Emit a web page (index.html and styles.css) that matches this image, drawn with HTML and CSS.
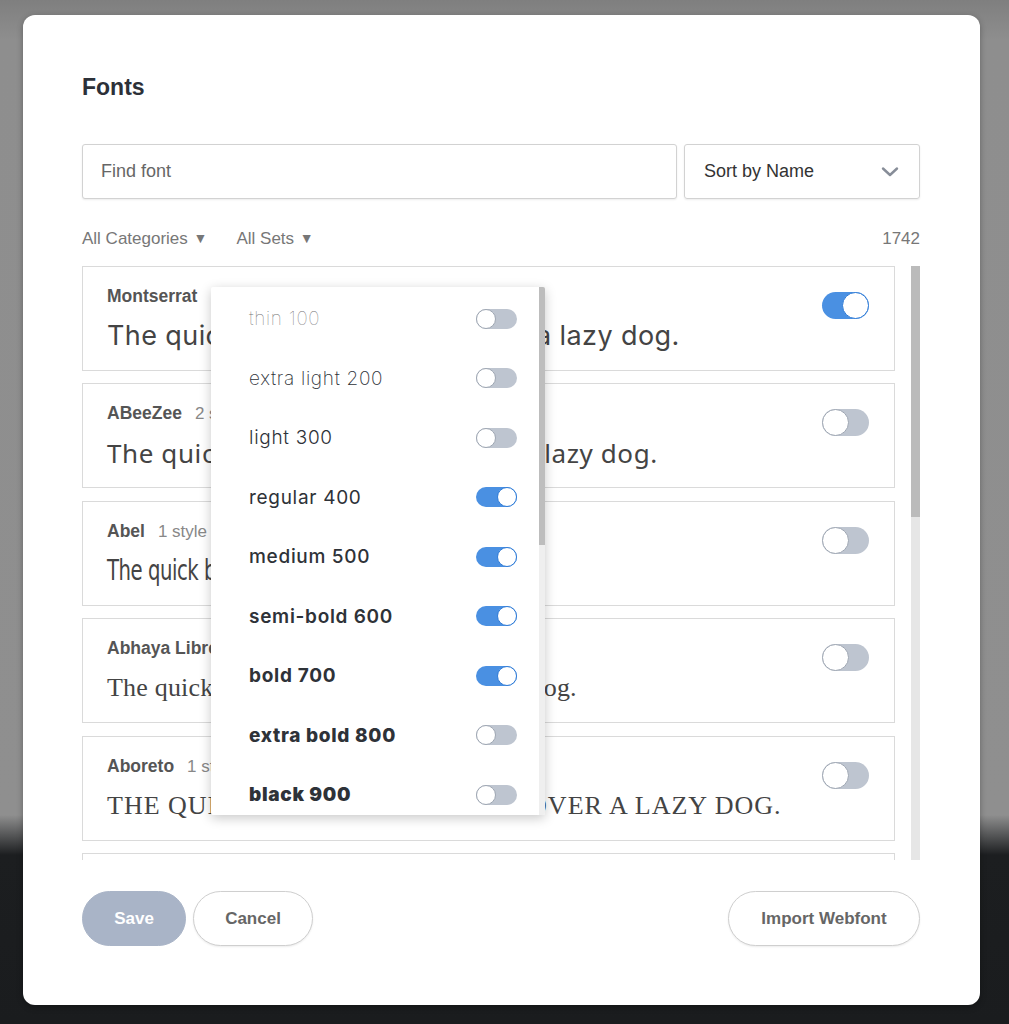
FILE: index.html
```html
<!DOCTYPE html>
<html lang="en">
<head>
    <meta charset="UTF-8">
    <meta name="viewport" content="width=device-width, initial-scale=1.0">
    <title>Fonts</title>
    <link rel="stylesheet" href="styles.css">
</head>
<body>
    <div class="modal">
        <h1 class="modal-title">Fonts</h1>

        <div class="search-row">
            <input class="search" type="text" placeholder="Find font">
            <div class="sort">
                <span>Sort by Name</span>
                <svg class="chevron" width="18" height="12" viewBox="0 0 18 12">
                    <path d="M2 2.5 L9 9 L16 2.5" fill="none" stroke="#878d98" stroke-width="2.4" stroke-linecap="round" stroke-linejoin="round"/>
                </svg>
            </div>
        </div>

        <div class="filters">
            <span class="filter">All Categories <i>▼</i></span>
            <span class="filter">All Sets <i>▼</i></span>
            <span class="count">1742</span>
        </div>

        <div class="list-wrap">
            <div class="font-list">
                <div class="font-item">
                    <div class="font-info">
                        <div class="font-head"><span class="font-name">Montserrat</span><span class="font-styles">18 styles</span></div>
                        <div class="font-sample s-montserrat">The quick brown fox jumps over a lazy dog.</div>
                    </div>
                    <span class="toggle on"></span>
                </div>
                <div class="font-item">
                    <div class="font-info">
                        <div class="font-head"><span class="font-name">ABeeZee</span><span class="font-styles">2 styles</span></div>
                        <div class="font-sample s-abeezee">The quick brown fox jumps over a lazy dog.</div>
                    </div>
                    <span class="toggle"></span>
                </div>
                <div class="font-item">
                    <div class="font-info">
                        <div class="font-head"><span class="font-name">Abel</span><span class="font-styles">1 style</span></div>
                        <div class="font-sample"><span class="s-abel">The quick brown fox jumps over a lazy dog.</span></div>
                    </div>
                    <span class="toggle"></span>
                </div>
                <div class="font-item">
                    <div class="font-info">
                        <div class="font-head"><span class="font-name">Abhaya Libre</span><span class="font-styles">5 styles</span></div>
                        <div class="font-sample s-abhaya">The quick brown fox jumps over a lazy dog.</div>
                    </div>
                    <span class="toggle"></span>
                </div>
                <div class="font-item">
                    <div class="font-info">
                        <div class="font-head"><span class="font-name">Aboreto</span><span class="font-styles">1 style</span></div>
                        <div class="font-sample s-aboreto">The quick brown fox jumps over a lazy dog.</div>
                    </div>
                    <span class="toggle"></span>
                </div>
                <div class="font-item">
                    <div class="font-info">
                        <div class="font-head"><span class="font-name">Abril Fatface</span><span class="font-styles">1 style</span></div>
                        <div class="font-sample">The quick brown fox jumps over a lazy dog.</div>
                    </div>
                    <span class="toggle"></span>
                </div>
            </div>
            <div class="scrollbar"><div class="thumb"></div></div>
        </div>

        <div class="actions">
            <button class="btn btn-save">Save</button>
            <button class="btn btn-cancel">Cancel</button>
            <button class="btn btn-import">Import Webfont</button>
        </div>

        <!-- menu de estilos de Montserrat -->
        <div class="styles-menu">
            <ul class="weights">
                <li class="w100"><span>thin 100</span><span class="toggle small"></span></li>
                <li class="w200"><span>extra light 200</span><span class="toggle small"></span></li>
                <li class="w300"><span>light 300</span><span class="toggle small"></span></li>
                <li class="w400"><span>regular 400</span><span class="toggle small on"></span></li>
                <li class="w500"><span>medium 500</span><span class="toggle small on"></span></li>
                <li class="w600"><span>semi-bold 600</span><span class="toggle small on"></span></li>
                <li class="w700"><span>bold 700</span><span class="toggle small on"></span></li>
                <li class="w800"><span>extra bold 800</span><span class="toggle small"></span></li>
                <li class="w900"><span>black 900</span><span class="toggle small"></span></li>
            </ul>
            <div class="menu-scroll"><div class="menu-thumb"></div></div>
        </div>
    </div>
</body>
</html>
```

FILE: styles.css
```css
body {
    margin: 0;
    font-family: "Liberation Sans", Arial, sans-serif;
    background: linear-gradient(to bottom, #7f7f7f 0, #8e8e8e 40px, #8f8f8f 815px, #1c1e20 855px, #1a1c1e 100%);
    min-height: 1024px;
    overflow: hidden;
}

.modal {
    position: relative;
    box-sizing: border-box;
    margin: 15px 29px 0 23px;
    height: 990px;
    padding: 59px 60px 0 59px;
    background-color: #fff;
    border-radius: 12px;
    box-shadow: 0 2px 6px rgba(0, 0, 0, 0.3);
}

.modal-title {
    margin: 0 0 44px;
    font-size: 23px;
    line-height: 26px;
    font-weight: bold;
    color: #2c3038;
}

/* Buscador */
.search-row {
    display: flex;
    gap: 7px;
    height: 55px;
}
.search {
    flex: 1;
    box-sizing: border-box;
    height: 55px;
    padding: 0 18px;
    border: 1px solid #d2d2d2;
    border-radius: 3px;
    box-shadow: 0 1px 2px rgba(0, 0, 0, 0.08);
    font-family: inherit;
    font-size: 18px;
    color: #333;
    outline: none;
}
.search::placeholder {
    color: #666;
}
.sort {
    box-sizing: border-box;
    width: 236px;
    display: flex;
    align-items: center;
    justify-content: space-between;
    padding: 0 20px 0 19px;
    border: 1px solid #d2d2d2;
    border-radius: 3px;
    box-shadow: 0 1px 2px rgba(0, 0, 0, 0.08);
    font-size: 18px;
    color: #333;
}

/* Filtros */
.filters {
    display: flex;
    align-items: center;
    margin-top: 30px;
    height: 20px;
    font-size: 17px;
    color: #777;
}
.filter {
    margin-right: 29px;
}
.filter i {
    font-style: normal;
    font-size: 14px;
    margin-left: 1px;
    position: relative;
    top: -1px;
}
.count {
    margin-left: auto;
}

/* Lista de fuentes */
.list-wrap {
    display: flex;
    gap: 16px;
    margin-top: 17px;
    height: 594px;
    overflow: hidden;
}
.font-list {
    flex: 1;
}
.font-item {
    box-sizing: border-box;
    height: 105px;
    margin-bottom: 12.4px;
    padding: 19px 25px 0 24px;
    border: 1px solid #dadada;
    display: flex;
    justify-content: space-between;
    align-items: flex-start;
    overflow: hidden;
}
.font-head {
    line-height: 20px;
    white-space: nowrap;
}
.font-name {
    font-size: 17.5px;
    font-weight: bold;
    color: #555;
}
.font-styles {
    margin-left: 13px;
    font-size: 17px;
    color: #888;
}
.font-sample {
    margin-top: 12px;
    font-size: 26px;
    line-height: 34px;
    color: #444;
    white-space: nowrap;
}
.s-montserrat {
    font-family: Inter, sans-serif;
    font-size: 27px;
    letter-spacing: 0.4px;
}
.s-abeezee {
    font-family: "Noto Sans", sans-serif;
    font-size: 26px;
    letter-spacing: 0.6px;
}
/* Abel es una fuente estrecha */
.s-abel {
    display: inline-block;
    font-family: "DejaVu Sans Condensed", "DejaVu Sans", sans-serif;
    font-size: 28px;
    letter-spacing: -0.6px;
    transform: scaleX(0.78);
    transform-origin: left center;
}
.s-abhaya {
    font-family: "Liberation Serif", serif;
    font-size: 26px;
    letter-spacing: 0.2px;
}
.s-aboreto {
    font-family: "Liberation Serif", serif;
    text-transform: uppercase;
    font-size: 26px;
    letter-spacing: 1px;
}

.scrollbar {
    width: 9px;
    background-color: #e6e6e6;
}
.thumb {
    height: 251px;
    background-color: #bbb;
}

/* Interruptores */
.toggle {
    position: relative;
    flex-shrink: 0;
    width: 47px;
    height: 27px;
    margin-top: 6px;
    border-radius: 14px;
    background-color: #bec5d0;
}
.toggle::after {
    content: "";
    position: absolute;
    left: 0;
    top: 0;
    box-sizing: border-box;
    width: 27px;
    height: 27px;
    border-radius: 50%;
    background-color: #fff;
    border: 1px solid #9ea6b2;
}
.toggle.on {
    background-color: #4a90e2;
}
.toggle.on::after {
    left: 20px;
    border-color: #2f7bd6;
}
.toggle.small {
    width: 41px;
    height: 20px;
    margin-top: 0;
    border-radius: 10px;
}
.toggle.small::after {
    width: 20px;
    height: 20px;
}
.toggle.small.on::after {
    left: 21px;
}

/* Botones */
.actions {
    display: flex;
    gap: 7px;
    margin-top: 31px;
}
.btn {
    height: 55px;
    padding: 0;
    border: 1px solid #cfcfcf;
    border-radius: 28px;
    background-color: #fff;
    font-family: inherit;
    font-size: 17px;
    line-height: 22px;
    font-weight: bold;
    color: #666;
    box-shadow: 0 1px 2px rgba(0, 0, 0, 0.08);
}
.btn-save {
    width: 104px;
    border-color: #a9b4c7;
    background-color: #a9b4c7;
    color: #fff;
    box-shadow: none;
}
.btn-cancel {
    width: 120px;
}
.btn-import {
    margin-left: auto;
    width: 192px;
}

/* Menu de pesos */
.styles-menu {
    position: absolute;
    left: 188px;
    top: 272px;
    width: 334px;
    height: 528px;
    display: flex;
    background-color: #fff;
    border-radius: 2px;
    box-shadow: 0 3px 12px rgba(0, 0, 0, 0.22);
    overflow: hidden;
}
.weights {
    flex: 1;
    list-style: none;
    margin: 0;
    padding: 2px 0 0;
}
.weights li {
    height: 59.5px;
    display: flex;
    align-items: center;
    justify-content: space-between;
    padding: 0 22px 0 38px;
    font-family: Inter, sans-serif;
    font-size: 19px;
    color: #2e3238;
    letter-spacing: 0.7px;
}
.weights .w100 { font-weight: 100; color: #6f6f6f; }
.weights .w200 { font-weight: 200; }
.weights .w300 { font-weight: 300; }
.weights .w400 { font-weight: 400; }
.weights .w500 { font-weight: 500; }
.weights .w600 { font-weight: 600; }
.weights .w700 { font-weight: 700; }
.weights .w800 { font-weight: 800; }
.weights .w900 { font-weight: 900; }

.menu-scroll {
    width: 6px;
    background-color: #efefef;
}
.menu-thumb {
    height: 258px;
    background-color: #bdbdbd;
}
```
